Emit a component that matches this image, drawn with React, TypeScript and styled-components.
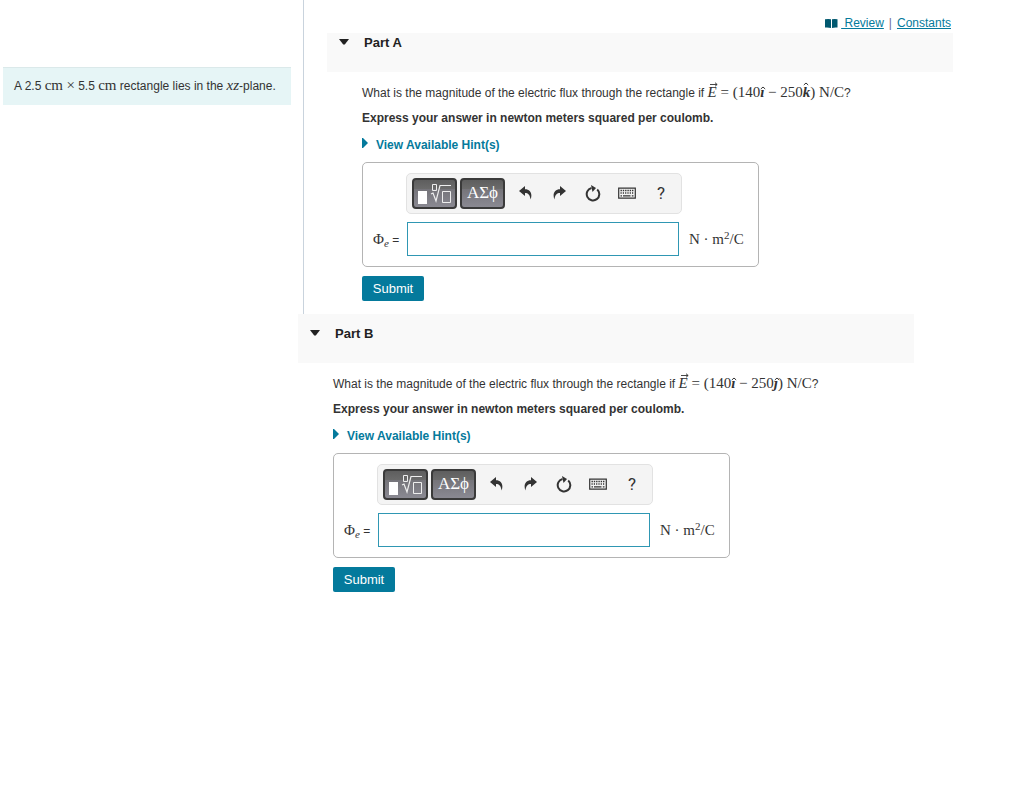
import React, { useId } from "react";
import styled, { createGlobalStyle } from "styled-components";

const GlobalStyle = createGlobalStyle`
  *, *::before, *::after { box-sizing: border-box; }
  body {
    margin: 0;
    background: #fff;
    color: #333;
    font-family: "Liberation Sans", Arial, sans-serif;
    font-size: 12px;
  }
  h2, p { margin: 0; }
  button { font-family: inherit; cursor: pointer; }
`;

const Top = styled.div`
  display: flex;
`;

const Sidebar = styled.aside`
  flex: 0 0 304px;
  min-height: 314px;
  padding: 67px 12px 0 3px;
  border-right: 1px solid #c9d3dd;
`;

const Statement = styled.p`
  padding: 0 11px;
  line-height: 37px;
  white-space: nowrap;
  background: #e6f5f6;
  border-top: 1px solid #dbe9ea;
`;

const Main = styled.main`
  flex: 1;
  padding: 0 71px 0 23px;
`;

const Lower = styled.div`
  padding: 0 110px 0 298px;
`;

const Resources = styled.nav`
  display: flex;
  justify-content: flex-end;
  align-items: center;
  height: 33px;
  padding: 13px 2px 0 0;
  color: #6a6a9a;
`;

const ResourceLink = styled.a`
  color: #047a9c;
  white-space: pre;
`;

const BookIcon = styled.svg`
  margin-right: 3px;
`;

const Separator = styled.span`
  margin: 0 5px;
`;

const PartHeader = styled.h2<{ $tall?: boolean }>`
  height: ${(p) => (p.$tall ? 49 : 39)}px;
  padding-top: ${(p) => (p.$tall ? 10 : 0)}px;
  background: #f9f9f9;
  line-height: 18px;
`;

const PartToggle = styled.button`
  display: flex;
  align-items: center;
  gap: 15px;
  height: 18px;
  padding: 0 12px;
  border: 0;
  background: none;
  color: #222;
  font-size: 13px;
  font-weight: bold;
`;

const PartBody = styled.div`
  padding: 9px 0 0 35px;
`;

const Line = styled.p<{ $bold?: boolean }>`
  height: 25px;
  line-height: 25px;
  white-space: nowrap;
  font-weight: ${(p) => (p.$bold ? "bold" : "normal")};
`;

const HintToggle = styled.button`
  display: flex;
  align-items: center;
  gap: 8px;
  height: 27px;
  margin-bottom: 4px;
  padding: 0;
  border: 0;
  background: none;
  color: #047a9c;
  font-size: 12px;
  font-weight: bold;
`;

const HintArrow = styled.svg`
  margin-bottom: 4px;
`;

const AnswerBox = styled.div`
  display: grid;
  grid-template-columns: 33px 276px auto;
  align-items: center;
  row-gap: 8px;
  max-width: 397px;
  padding: 10px;
  border: 1px solid #b4b4b4;
  border-radius: 5px;
`;

const Toolbar = styled.div`
  grid-column: 2;
  display: flex;
  align-items: center;
  height: 41px;
  padding: 0 5px;
  background: #f4f4f4;
  border: 1px solid #e2e2e2;
  border-radius: 5px;
`;

const PaletteButton = styled.button`
  display: flex;
  align-items: center;
  justify-content: center;
  flex: none;
  width: 45px;
  height: 31px;
  margin-right: 3px;
  padding: 0 0 2px;
  border: 2px solid #3a3a3a;
  border-radius: 4px;
  background: linear-gradient(#5e5e5e, #6b6b6b 33%, #75747a 34%, #8a8992);
  color: #fff;
  font-family: "Liberation Serif", serif;
  font-size: 17px;
`;

const ToolButton = styled.button`
  display: flex;
  align-items: center;
  justify-content: center;
  flex: none;
  width: 34px;
  height: 31px;
  padding: 0 0 1px;
  border: 0;
  background: none;
  color: #333;
  font-family: Roboto, sans-serif;
  font-size: 17px;
`;

const AnswerLabel = styled.label`
  grid-column: 1;
  white-space: nowrap;
`;

const AnswerInput = styled.input`
  width: 272px;
  height: 34px;
  margin-left: 1px;
  padding: 0 8px;
  border: 1px solid #2f97b3;
  font-size: 14px;
`;

const Units = styled.span`
  padding-left: 7px;
  white-space: nowrap;
`;

const Submit = styled.button`
  display: block;
  width: 62px;
  height: 25px;
  margin: 9px 0 13px;
  padding: 0 0 1px;
  border: 0;
  border-radius: 2px;
  background: #047a9c;
  color: #fff;
  font-size: 13px;
`;

const Serif = styled.span`
  font-family: "Liberation Serif", serif;
  font-size: 15px;
  line-height: 1;
`;

const Script = styled.span<{ $raised?: boolean }>`
  position: relative;
  top: ${(p) => (p.$raised ? -5 : 3)}px;
  font-size: 11px;
`;

const Accented = styled.i`
  position: relative;
`;

const HattedLetter = styled(Accented)`
  font-weight: bold;
`;

const AccentMark = styled.svg<{ $high?: boolean }>`
  position: absolute;
  left: 0;
  top: ${(p) => (p.$high ? -2 : 2)}px;
`;

const Vector = ({ children }: { children: string }) => (
  <Accented>
    {children}
    <AccentMark $high width="11" height="5" viewBox="0 0 11 5" aria-hidden="true">
      <path d="M2 2.5H9M7 .7L9.2 2.5L7 4.3" fill="none" stroke="#333" strokeWidth=".9" />
    </AccentMark>
  </Accented>
);

const Hat = ({ children, high }: { children: string; high?: boolean }) => (
  <HattedLetter>
    {children}
    <AccentMark $high={high} width="6" height="4" viewBox="0 0 6 4" aria-hidden="true">
      <path d="M.8 3L3 1L5.2 3" fill="none" stroke="#333" />
    </AccentMark>
  </HattedLetter>
);

const RootIcon = () => (
  <svg width="35" height="23" viewBox="0 0 35 23" fill="none" aria-hidden="true">
    <path d="M1 10H10V23H1Z" fill="#fff" />
    <path d="M15.5 3.5H19.5V9.5H15.5Z" stroke="#eee" />
    <path d="M14 13L16 12L19 20L23 4.5H34" stroke="#eee" strokeWidth="1.2" />
    <path d="M25.5 10.5H33.5V21.5H25.5Z" stroke="#eee" />
  </svg>
);

const ArrowIcon = ({ flip }: { flip?: boolean }) => (
  <svg width="13" height="14" viewBox="0 0 13 14" aria-hidden="true">
    <path
      d={
        flip
          ? "M7 0L13 5L7 10V7C4 7 2 8.5 1.5 13.5C-.8 8 1.5 3.2 7 3.2Z"
          : "M6 0L0 5L6 10V7C9 7 11 8.5 11.5 13.5C13.8 8 11.5 3.2 6 3.2Z"
      }
      fill="#333"
    />
  </svg>
);

const ResetIcon = () => (
  <svg width="16" height="17" viewBox="0 0 16 17" aria-hidden="true">
    <path d="M12.2 4.4A6.3 6.3 0 1 1 6.5 3" fill="none" stroke="#333" strokeWidth="2" />
    <path d="M6 0L11 3L7.5 7Z" fill="#333" />
  </svg>
);

const KeyboardIcon = () => (
  <svg width="18" height="12" viewBox="0 0 18 12" fill="none" aria-hidden="true">
    <path d="M.7 1.2H17.3V11.2H.7Z" stroke="#333" strokeWidth="1.2" />
    <path d="M2.5 3.5H15.5" stroke="#333" strokeDasharray="1.4 .9" strokeWidth="1.3" />
    <path d="M2.5 6H15.5" stroke="#333" strokeDasharray="1.2 1.1" strokeWidth="1.3" />
    <path d="M2.5 8.8H4M5 8.8H12.5M13.8 8.8H15.5" stroke="#333" strokeWidth="1.3" />
  </svg>
);

interface PartProps {
  title: string;
  tall?: boolean;
  unitVector: React.ReactNode;
}

const Part = ({ title, tall, unitVector }: PartProps) => {
  const answerId = useId();
  return (
    <section>
      <PartHeader $tall={tall}>
        <PartToggle aria-expanded="true">
          <svg width="10" height="6" viewBox="0 0 10 6" aria-hidden="true">
            <path d="M0 0H10L5.8 5.4H4.2Z" fill="#222" />
          </svg>
          {title}
        </PartToggle>
      </PartHeader>
      <PartBody>
        <Line>
          What is the magnitude of the electric flux through the rectangle if{" "}
          <Serif>
            <Vector>E</Vector> = (140<Hat>ı</Hat> − 250{unitVector}) N/C
          </Serif>
          ?
        </Line>
        <Line $bold>Express your answer in newton meters squared per coulomb.</Line>
        <HintToggle>
          <HintArrow width="6" height="10" viewBox="0 0 6 10" aria-hidden="true">
            <path d="M0 0H1L6 5L1 10H0Z" fill="#047a9c" />
          </HintArrow>
          View Available Hint(s)
        </HintToggle>
        <AnswerBox>
          <Toolbar role="toolbar" aria-label="Equation tools">
            <PaletteButton aria-label="Templates">
              <RootIcon />
            </PaletteButton>
            <PaletteButton aria-label="Symbols">ΑΣϕ</PaletteButton>
            <ToolButton aria-label="Undo">
              <ArrowIcon />
            </ToolButton>
            <ToolButton aria-label="Redo">
              <ArrowIcon flip />
            </ToolButton>
            <ToolButton aria-label="Reset">
              <ResetIcon />
            </ToolButton>
            <ToolButton aria-label="Keyboard shortcuts">
              <KeyboardIcon />
            </ToolButton>
            <ToolButton aria-label="Help">?</ToolButton>
          </Toolbar>
          <AnswerLabel htmlFor={answerId}>
            <Serif>
              Φ
              <Script>
                <i>e</i>
              </Script>
            </Serif>{" "}
            =
          </AnswerLabel>
          <AnswerInput id={answerId} type="text" />
          <Units>
            <Serif>
              N · m<Script $raised>2</Script>/C
            </Serif>
          </Units>
        </AnswerBox>
        <Submit>Submit</Submit>
      </PartBody>
    </section>
  );
};

const App = () => (
  <>
    <GlobalStyle />
    <Top>
      <Sidebar>
        <Statement>
          A 2.5 <Serif>cm</Serif> <Serif>×</Serif> 5.5 <Serif>cm</Serif> rectangle lies in the{" "}
          <Serif>
            <i>xz</i>
          </Serif>
          -plane.
        </Statement>
      </Sidebar>
      <Main>
        <Resources>
          <BookIcon width="13" height="9" viewBox="0 0 13 9" aria-hidden="true">
            <path d="M0 .3Q3.5 -.2 6 .3V9Q3 8.2 0 8.6ZM7 .3Q9.5 -.2 12.5 .3V8.6Q9.5 8.2 7 9Z" fill="#00586f" />
          </BookIcon>
          <ResourceLink href="#review"> Review</ResourceLink>
          <Separator>|</Separator>
          <ResourceLink href="#constants">Constants</ResourceLink>
        </Resources>
        <Part title="Part A" unitVector={<Hat high>k</Hat>} />
      </Main>
    </Top>
    <Lower>
      <Part title="Part B" tall unitVector={<Hat>ȷ</Hat>} />
    </Lower>
  </>
);

export default App;
